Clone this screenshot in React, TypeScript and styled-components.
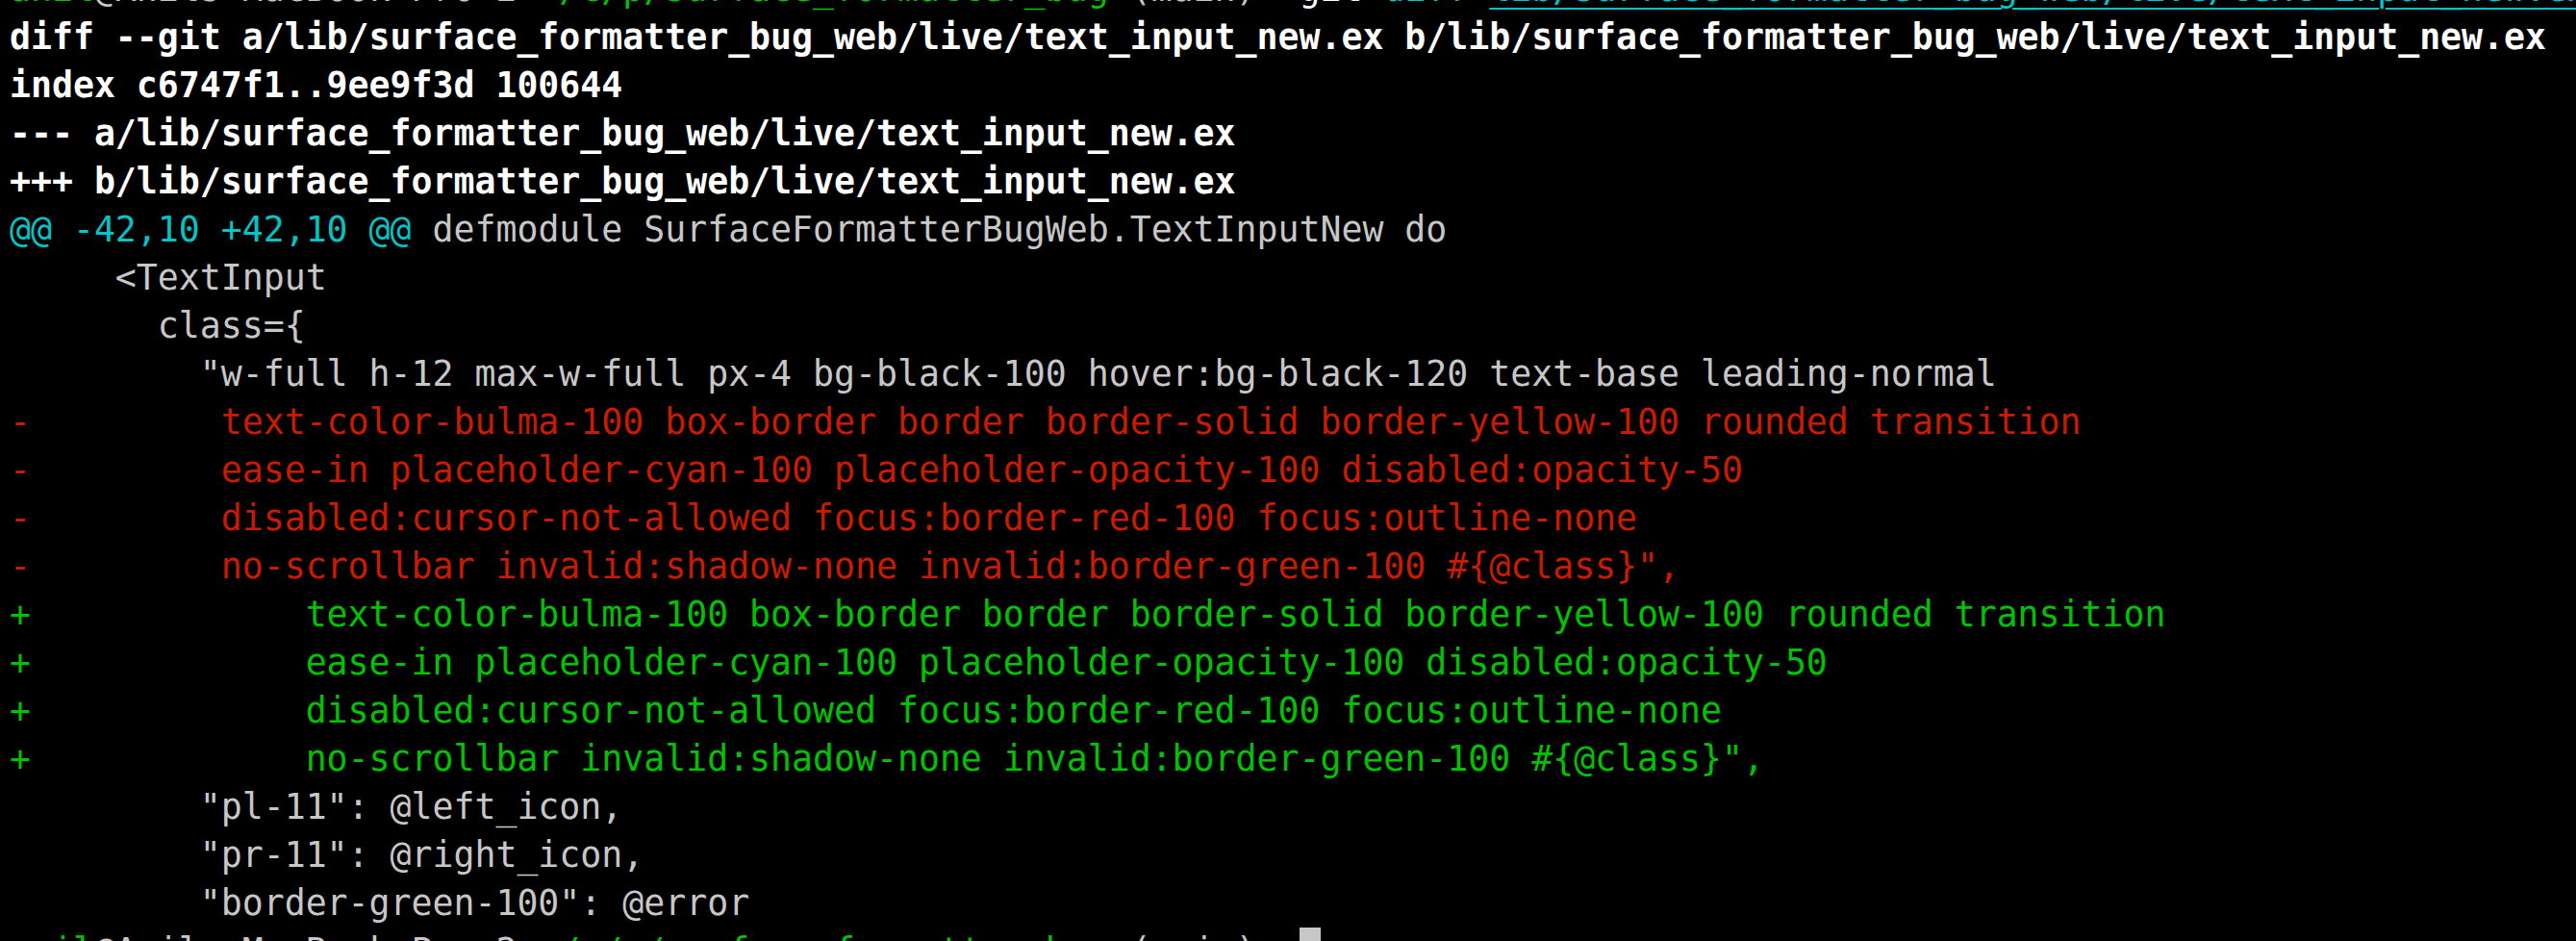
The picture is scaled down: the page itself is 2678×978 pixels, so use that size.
import React from "react";
import styled, { createGlobalStyle } from "styled-components";

const GlobalStyle = createGlobalStyle`
  html, body {
    margin: 0;
    padding: 0;
    background: #000000;
    overflow: hidden;
  }
`;

const COLORS = {
  fg: "#c7c7c7",
  bright: "#ffffff",
  red: "#c91b00",
  green: "#00c200",
  cyan: "#00c5c7",
};

type Tone = keyof typeof COLORS;

interface Seg {
  t: string;
  c?: Tone;
  b?: boolean;
  u?: boolean;
}

const Terminal = styled.div`
  width: 100vw;
  height: 100vh;
  background: #000000;
  overflow: hidden;
  box-sizing: border-box;
  padding-left: 10px;
  font-family: "DejaVu Sans Mono", "Liberation Mono", monospace;
  font-size: 36.5px;
  line-height: 50px;
  color: ${COLORS.fg};
`;

const Scrollback = styled.div`
  display: flex;
  flex-direction: column;
  margin-top: -36px;
`;

const Row = styled.div`
  height: 50px;
  white-space: pre;
`;

const Span = styled.span<{ $tone: Tone; $bold?: boolean; $under?: boolean }>`
  color: ${(p) => COLORS[p.$tone]};
  font-weight: ${(p) => (p.$bold ? 700 : 400)};
  text-decoration: ${(p) => (p.$under ? "underline" : "none")};
  text-decoration-thickness: 2px;
  text-underline-offset: 7px;
  text-decoration-skip-ink: auto;
`;

const Cursor = styled.span`
  display: inline-block;
  width: 22px;
  height: 50px;
  vertical-align: top;
  background: #c7c7c7;
`;

const prompt = (user: string, host: string): Seg[] => [
  { t: user, c: "green" },
  { t: host, c: "fg" },
  { t: " " },
  { t: "~/c/p/surface_formatter_bug", c: "green" },
  { t: " (main)", c: "fg" },
  { t: "> ", c: "fg" },
];

const minus = [
  "text-color-bulma-100 box-border border border-solid border-yellow-100 rounded transition",
  "ease-in placeholder-cyan-100 placeholder-opacity-100 disabled:opacity-50",
  "disabled:cursor-not-allowed focus:border-red-100 focus:outline-none",
  'no-scrollbar invalid:shadow-none invalid:border-green-100 #{@class}",',
];

const lines: Seg[][] = [
  [
    ...prompt("anil", "@Anils-MacBook-Pro-2"),
    { t: "git ", c: "bright" },
    { t: "diff ", c: "cyan" },
    { t: "lib/surface_formatter_bug_web/live/text_input_new.ex", c: "cyan", u: true },
  ],
  [
    {
      t: "diff --git a/lib/surface_formatter_bug_web/live/text_input_new.ex b/lib/surface_formatter_bug_web/live/text_input_new.ex",
      c: "bright",
      b: true,
    },
  ],
  [{ t: "index c6747f1..9ee9f3d 100644", c: "bright", b: true }],
  [{ t: "--- a/lib/surface_formatter_bug_web/live/text_input_new.ex", c: "bright", b: true }],
  [{ t: "+++ b/lib/surface_formatter_bug_web/live/text_input_new.ex", c: "bright", b: true }],
  [
    { t: "@@ -42,10 +42,10 @@", c: "cyan" },
    { t: " defmodule SurfaceFormatterBugWeb.TextInputNew do", c: "fg" },
  ],
  [{ t: "     <TextInput", c: "fg" }],
  [{ t: "       class={", c: "fg" }],
  [
    {
      t: '         "w-full h-12 max-w-full px-4 bg-black-100 hover:bg-black-120 text-base leading-normal',
      c: "fg",
    },
  ],
  ...minus.map((s): Seg[] => [{ t: "-         " + s, c: "red" }]),
  ...minus.map((s): Seg[] => [{ t: "+             " + s, c: "green" }]),
  [{ t: '         "pl-11": @left_icon,', c: "fg" }],
  [{ t: '         "pr-11": @right_icon,', c: "fg" }],
  [{ t: '         "border-green-100": @error', c: "fg" }],
];

export default function App() {
  return (
    <>
      <GlobalStyle />
      <Terminal>
        <Scrollback>
          {lines.map((segs, i) => (
            <Row key={i}>
              {segs.map((s, j) => (
                <Span key={j} $tone={s.c ?? "fg"} $bold={s.b} $under={s.u}>
                  {s.t}
                </Span>
              ))}
            </Row>
          ))}
          <Row>
            {prompt("anil", "@Anils-MacBook-Pro-2").map((s, j) => (
              <Span key={j} $tone={s.c ?? "fg"}>
                {s.t}
              </Span>
            ))}
            <Cursor />
          </Row>
        </Scrollback>
      </Terminal>
    </>
  );
}
